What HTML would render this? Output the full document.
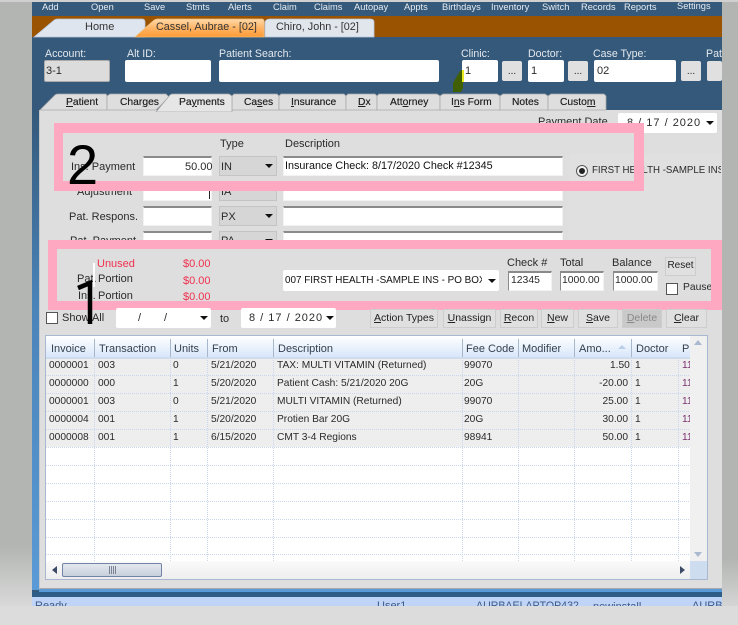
<!DOCTYPE html>
<html><head><meta charset="utf-8">
<style>
html,body{margin:0;padding:0}
body{width:738px;height:625px;position:relative;overflow:hidden;background:#dcdcdc;font-family:"Liberation Sans",sans-serif;font-size:11px;color:#222;filter:blur(.25px)}
div,span.a,svg{position:absolute}
.t{position:absolute;white-space:nowrap;line-height:14px;height:14px;font-size:11px;color:#2a2a2a}
.w{color:#e4e8ee;font-size:10.6px}
.m{color:#e8ecf2;font-size:9.3px;line-height:10px;height:10px;top:2px}
.tb{font-size:10.3px;color:#222;top:96px;text-shadow:0 0 .4px #333}
.in{background:#fff;box-sizing:border-box;border-radius:2px}
.f{background:#fff;box-sizing:border-box;border:1px solid #f2f2f2;border-top:2px solid #8a8a8a}
.sel{background:#d6d6d6;border:1px solid #c4c4c4;box-sizing:border-box}
.btn{background:#e0e0e0;border:1px solid #cdcdcd;box-sizing:border-box;text-align:center;line-height:16px;font-size:10.5px;color:#222;height:19px;top:309px}
.dd{width:0;height:0;border-left:4px solid transparent;border-right:4px solid transparent;border-top:4px solid #111}
.h{font-size:11px;color:#33404f;top:342px}
.r{color:#2a2a2a;font-size:10.2px}
.red{color:#f0304f}
.pk{background:#ffa8c1}
</style></head><body>
<!-- outer background -->
<div style="left:0;top:0;width:32px;height:606px;background:linear-gradient(#b3b5b3 0,#b3b5b3 90%,#d8d9d8 100%)"></div>
<div style="left:722px;top:0;width:16px;height:606px;background:linear-gradient(#b3b5b3 0,#b3b5b3 92%,#d4d5d4 100%)"></div>
<div style="left:0;top:0;width:738px;height:2px;background:#d0d0d0"></div>
<!-- window -->
<div style="left:32px;top:2px;width:690px;height:604px;background:#34597a"></div>
<div style="left:32px;top:110px;width:7px;height:480px;background:linear-gradient(#34597a,#4a83b8 40%,#5a9ad6)"></div>
<!-- menu -->
<span class="t m" style="left:42px">Add</span>
<span class="t m" style="left:91px">Open</span>
<span class="t m" style="left:144px">Save</span>
<span class="t m" style="left:186px">Stmts</span>
<span class="t m" style="left:228px">Alerts</span>
<span class="t m" style="left:273px">Claim</span>
<span class="t m" style="left:314px">Claims</span>
<span class="t m" style="left:354px">Autopay</span>
<span class="t m" style="left:404px;top:2px">Appts</span>
<span class="t m" style="left:442px;top:2px">Birthdays</span>
<span class="t m" style="left:491px;top:2px">Inventory</span>
<span class="t m" style="left:542px;top:2px">Switch</span>
<span class="t m" style="left:581px;top:2px">Records</span>
<span class="t m" style="left:624px;top:2px">Reports</span>
<span class="t m" style="left:677px;top:1px">Settings</span>
<!-- orange band and doc tabs -->
<div style="left:32px;top:16px;width:690px;height:21px;background:#9a5300"></div>
<svg style="left:32px;top:16px" width="350" height="22">
<defs><linearGradient id="o" x1="0" y1="0" x2="0" y2="1"><stop offset="0" stop-color="#ffd9a8"/><stop offset=".5" stop-color="#ffb566"/><stop offset="1" stop-color="#ff9a33"/></linearGradient></defs>
<path d="M2 21 L21 5 Q23 3 26 3 L110 3 Q113 3 113 6 L113 21Z" fill="#dfe5ee" stroke="#b8c8dc" stroke-width=".8"/>
<path d="M103 21 L121 5 Q123 3 126 3 L230 3 Q232 3 232 6 L232 21Z" fill="url(#o)" stroke="#f0c080" stroke-width=".8"/>
<path d="M233 21 L233 6 Q234 3 238 3 L338 3 Q342 3 342 6 L342 21Z" fill="#e1e6ed" stroke="#b8c8dc" stroke-width=".8"/>
</svg>
<span class="t" style="left:85px;top:20px;color:#333">Home</span>
<span class="t" style="left:156px;top:20px;color:#333;font-size:10.8px">Cassel, Aubrae - [02]</span>
<span class="t" style="left:276px;top:20px;color:#333;font-size:10.8px">Chiro, John - [02]</span>
<!-- patient bar -->
<span class="t w" style="left:45px;top:47px">Account:</span>
<span class="t w" style="left:127px;top:47px">Alt ID:</span>
<span class="t w" style="left:219px;top:47px">Patient Search:</span>
<span class="t w" style="left:461px;top:47px">Clinic:</span>
<span class="t w" style="left:528px;top:47px">Doctor:</span>
<span class="t w" style="left:593px;top:47px">Case Type:</span>
<span class="t w" style="left:706px;top:47px;width:16px;overflow:hidden">Patient</span>
<div class="in" style="left:44px;top:60px;width:66px;height:22px;background:#dcdcdc;border:1px solid #aaa"></div>
<span class="t" style="left:46px;top:64px">3-1</span>
<div class="in" style="left:125px;top:60px;width:86px;height:22px"></div>
<div class="in" style="left:219px;top:60px;width:220px;height:22px"></div>
<div class="in" style="left:462px;top:60px;width:36px;height:22px"></div>
<div class="in" style="left:528px;top:60px;width:36px;height:22px"></div>
<div class="in" style="left:594px;top:60px;width:82px;height:22px"></div>
<span class="t" style="left:465px;top:64px">1</span>
<span class="t" style="left:531px;top:64px">1</span>
<span class="t" style="left:597px;top:64px">02</span>
<div class="in" style="left:502px;top:61px;width:20px;height:20px;background:#e0e0e0;text-align:center;font-size:10px;line-height:22px">...</div>
<div class="in" style="left:568px;top:61px;width:20px;height:20px;background:#e0e0e0;text-align:center;font-size:10px;line-height:22px">...</div>
<div class="in" style="left:681px;top:61px;width:20px;height:20px;background:#e0e0e0;text-align:center;font-size:10px;line-height:22px">...</div>
<div class="in" style="left:707px;top:61px;width:15px;height:20px;background:#e0e0e0"></div>
<svg style="left:450px;top:68px" width="16" height="26"><path d="M3 15 L10 3 L13 2 L13 20 L11 24 L3 24Z" fill="#3f5f00"/><rect x="12" y="2" width="2" height="12" fill="#e8e820"/></svg>
<!-- main panel -->
<div style="left:39px;top:110px;width:683px;height:479px;background:#dedede;box-sizing:border-box;border-left:1px solid #c8c8c8;border-bottom:1px solid #a8a8a8"></div>
<!-- sub tabs -->
<svg style="left:38px;top:92px" width="580" height="20">
<g fill="#dedede" stroke="#a9a9a9" stroke-width=".8">
<path d="M2 18 L17 3 Q18 2 20 2 L68 2 L69 4 L69 18Z"/>
<path d="M69 18 L69 4 L72 2 L128 2 L131 5 L118 18Z"/>
<path d="M194 18 L194 4 L196 2 L239 2 L241 4 L241 18Z"/>
<path d="M241 18 L241 4 L243 2 L306 2 L308 4 L308 18Z"/>
<path d="M308 18 L308 4 L310 2 L337 2 L339 4 L339 18Z"/>
<path d="M339 18 L339 4 L341 2 L399 2 L402 4 L402 18Z"/>
<path d="M402 18 L402 4 L405 2 L459 2 L462 4 L462 18Z"/>
<path d="M462 18 L462 4 L465 2 L507 2 L510 4 L510 18Z"/>
<path d="M510 18 L510 4 L513 2 L566 2 L568 4 L568 18Z"/>
<path d="M118 20 L132 3 Q133 2 135 2 L191 2 L194 4 L194 20Z" fill="#e6e6e6"/>
</g></svg>
<span class="t tb" style="left:66px"><u>P</u>atient</span>
<span class="t tb" style="left:120px">Char<u>g</u>es</span>
<span class="t tb" style="left:179px">Pa<u>y</u>ments</span>
<span class="t tb" style="left:244px">Ca<u>s</u>es</span>
<span class="t tb" style="left:291px"><u>I</u>nsurance</span>
<span class="t tb" style="left:358px"><u>D</u>x</span>
<span class="t tb" style="left:390px">Att<u>o</u>rney</span>
<span class="t tb" style="left:451px">I<u>n</u>s Form</span>
<span class="t tb" style="left:512px">Notes</span>
<span class="t tb" style="left:560px">Custo<u>m</u></span>
<!-- payment date -->
<span class="t" style="left:538px;top:115px">Payment Date</span>
<div class="in" style="left:618px;top:113px;width:99px;height:20px"></div>
<span class="t" style="left:627px;top:116px;letter-spacing:1px">8 / 17 / 2020</span>
<div class="dd" style="left:706px;top:121px"></div>
<!-- form -->
<span class="t" style="left:220px;top:137px">Type</span>
<span class="t" style="left:285px;top:137px">Description</span>
<span class="t" style="left:71px;top:160px">Ins. Payment</span>
<span class="t" style="left:77px;top:185px">Adjustment</span>
<span class="t" style="left:69px;top:210px">Pat. Respons.</span>
<span class="t" style="left:70px;top:234px">Pat. Payment</span>
<div class="f" style="left:143px;top:156px;width:69px;height:20px"></div>
<div class="f" style="left:143px;top:181px;width:69px;height:20px"></div>
<div class="f" style="left:143px;top:206px;width:69px;height:20px"></div>
<div class="f" style="left:143px;top:231px;width:69px;height:20px"></div>
<span class="t" style="left:185px;top:160px">50.00</span>
<div style="left:209px;top:190px;width:1px;height:9px;background:#222"></div>
<div class="sel" style="left:219px;top:156px;width:58px;height:20px"></div>
<div class="sel" style="left:219px;top:181px;width:58px;height:20px"></div>
<div class="sel" style="left:219px;top:206px;width:58px;height:20px"></div>
<div class="sel" style="left:219px;top:231px;width:58px;height:20px"></div>
<span class="t" style="left:221px;top:160px">IN</span>
<span class="t" style="left:221px;top:185px">IA</span>
<span class="t" style="left:221px;top:210px">PX</span>
<span class="t" style="left:221px;top:234px">PA</span>
<div class="dd" style="left:265px;top:164px"></div>
<div class="dd" style="left:265px;top:214px"></div>
<div class="dd" style="left:265px;top:239px"></div>
<div class="f" style="left:283px;top:156px;width:280px;height:20px"></div>
<div class="f" style="left:283px;top:181px;width:280px;height:20px"></div>
<div class="f" style="left:283px;top:206px;width:280px;height:20px"></div>
<div class="f" style="left:283px;top:231px;width:280px;height:20px"></div>
<span class="t" style="left:285px;top:159px;font-size:10.8px;color:#111">Insurance Check: 8/17/2020 Check #12345</span>
<!-- radio -->
<div style="left:569px;top:154px;width:153px;height:90px;background:#e0e0e0"></div>
<div style="left:576px;top:165px;width:12px;height:12px;box-sizing:border-box;border:1px solid #555;border-radius:50%;background:#f4f4f4"></div>
<div style="left:579px;top:168px;width:6px;height:6px;border-radius:50%;background:#222"></div>
<span class="t" style="left:592px;top:164px;font-size:9.7px;width:129px;overflow:hidden">FIRST HEALTH -SAMPLE INS</span>
<!-- pink 2 -->
<div class="pk" style="left:54px;top:123px;width:590px;height:10px"></div>
<div class="pk" style="left:54px;top:181px;width:590px;height:10px"></div>
<div class="pk" style="left:54px;top:123px;width:9px;height:68px"></div>
<div class="pk" style="left:634px;top:123px;width:10px;height:68px"></div>
<span class="t" style="left:67px;top:140px;font-size:56px;line-height:50px;height:50px;color:#000">2</span>
<!-- section 1 bg -->
<div style="left:47px;top:240px;width:675px;height:70px;background:#dedede"></div>
<span class="t red" style="left:97px;top:257px">Unused</span>
<span class="t" style="left:98px;top:272px">Portion</span>
<span class="t" style="left:98px;top:289px">Portion</span>
<span class="t" style="left:77px;top:272px">Pat.</span>
<span class="t" style="left:78px;top:289px">Ins.</span>
<span class="t red" style="left:183px;top:257px">$0.00</span>
<span class="t red" style="left:183px;top:274px">$0.00</span>
<span class="t red" style="left:183px;top:290px">$0.00</span>
<div style="left:93px;top:263px;width:2px;height:24px;background:#fff"></div>
<div class="in" style="left:283px;top:270px;width:216px;height:21px"></div>
<span class="t" style="left:285px;top:274px;width:197px;overflow:hidden;font-size:9.9px;color:#111">007 FIRST HEALTH -SAMPLE INS - PO BOX</span>
<div class="dd" style="left:488px;top:279px"></div>
<span class="t" style="left:507px;top:256px">Check #</span>
<span class="t" style="left:560px;top:256px">Total</span>
<span class="t" style="left:612px;top:256px">Balance</span>
<div class="f" style="left:508px;top:271px;width:44px;height:20px;border-left:1px solid #8a8a8a"></div>
<div class="f" style="left:560px;top:271px;width:44px;height:20px;border-left:1px solid #8a8a8a"></div>
<div class="f" style="left:613px;top:271px;width:45px;height:20px;border-left:1px solid #8a8a8a"></div>
<span class="t" style="left:511px;top:274px;font-size:10.4px">12345</span>
<span class="t" style="left:562px;top:274px;font-size:10.4px">1000.00</span>
<span class="t" style="left:615px;top:274px;font-size:10.4px">1000.00</span>
<div class="btn" style="left:665px;top:257px;width:31px;font-size:10px;background:#e0e0e0">Reset</div>
<div style="left:666px;top:283px;width:12px;height:12px;box-sizing:border-box;background:#fff;border:1px solid #555"></div>
<span class="t" style="left:683px;top:281px;font-size:10.3px">Pause</span>
<!-- pink 1 -->
<div class="pk" style="left:48px;top:240px;width:674px;height:9px"></div>
<div class="pk" style="left:48px;top:301px;width:674px;height:9px"></div>
<div class="pk" style="left:48px;top:240px;width:9px;height:70px"></div>
<div class="pk" style="left:711px;top:240px;width:11px;height:70px"></div>
<!-- toolbar row -->
<div style="left:46px;top:312px;width:12px;height:12px;box-sizing:border-box;background:#fff;border:1px solid #555"></div>
<span class="t" style="left:62px;top:311px">Show All</span>
<div class="in" style="left:116px;top:308px;width:95px;height:20px"></div>
<span class="t" style="left:138px;top:311px">/</span>
<span class="t" style="left:164px;top:311px">/</span>
<div class="dd" style="left:200px;top:316px"></div>
<span class="t" style="left:220px;top:312px">to</span>
<div class="in" style="left:241px;top:308px;width:95px;height:20px"></div>
<span class="t" style="left:249px;top:311px;letter-spacing:1px">8 / 17 / 2020</span>
<div class="dd" style="left:326px;top:316px"></div>
<div class="btn" style="left:370px;width:68px"><u>A</u>ction Types</div>
<div class="btn" style="left:443px;width:53px"><u>U</u>nassign</div>
<div class="btn" style="left:500px;width:38px"><u>R</u>econ</div>
<div class="btn" style="left:541px;width:33px"><u>N</u>ew</div>
<div class="btn" style="left:578px;width:40px"><u>S</u>ave</div>
<div class="btn" style="left:622px;width:40px;background:#c9c9c9;color:#888"><u>D</u>elete</div>
<div class="btn" style="left:666px;width:41px"><u>C</u>lear</div>
<!-- big hand-drawn 1 -->
<svg style="left:70px;top:272px" width="30" height="60"><path d="M8 16 L20 11 L20 52" fill="none" stroke="#000" stroke-width="4.5"/></svg>
<!-- grid -->
<div style="left:45px;top:335px;width:663px;height:245px;background:#fff;box-sizing:border-box;border:1px solid #a9b8d0"></div>
<div style="left:46px;top:336px;width:644px;height:22px;background:linear-gradient(#fff,#d6e5fa)"></div>
<div style="left:46px;top:358px;width:644px;height:89px;background:#eeeeee"></div>
<div style="left:46px;top:357px;width:644px;height:2px;background:#cfdced"></div>
<svg style="left:46px;top:336px" width="644" height="225">
<g stroke="#c6d7ee" stroke-width="1" stroke-dasharray="1 1" fill="none">
<path d="M0 39.5H644M0 57.5H644M0 75.5H644M0 93.5H644M0 111.5H644M0 129.5H644M0 147.5H644M0 165.5H644M0 183.5H644M0 201.5H644M0 218.5H644"/>
<path d="M48.5 22V225M124.5 22V225M161.5 22V225M227.5 22V225M416.5 22V225M472.5 22V225M528.5 22V225M585.5 22V225M632.5 22V225"/>
</g>
<g stroke="#a8b8cc" stroke-width="1"><path d="M48.5 3V21M124.5 3V21M161.5 3V21M227.5 3V21M416.5 3V21M472.5 3V21M528.5 3V21M585.5 3V21"/></g>
</svg>
<span class="t h" style="left:51px">Invoice</span>
<span class="t h" style="left:99px">Transaction</span>
<span class="t h" style="left:174px">Units</span>
<span class="t h" style="left:212px">From</span>
<span class="t h" style="left:278px">Description</span>
<span class="t h" style="left:466px">Fee Code</span>
<span class="t h" style="left:522px">Modifier</span>
<span class="t h" style="left:579px">Amo...</span>
<div style="left:618px;top:345px;width:0;height:0;border-left:4px solid transparent;border-right:4px solid transparent;border-bottom:4px solid #b8cfe8"></div>
<span class="t h" style="left:636px">Doctor</span>
<span class="t h" style="left:682px;width:8px;overflow:hidden">Place</span>
<!-- rows -->
<span class="t r" style="left:49px;top:359px">0000001</span><span class="t r" style="left:98px;top:359px">003</span><span class="t r" style="left:173px;top:359px">0</span><span class="t r" style="left:211px;top:359px">5/21/2020</span><span class="t r" style="left:277px;top:359px">TAX: MULTI VITAMIN (Returned)</span><span class="t r" style="left:464px;top:359px">99070</span><span class="t r" style="left:610px;top:359px;width:18px;text-align:right">1.50</span><span class="t r" style="left:635px;top:359px">1</span><span class="t r" style="left:682px;top:359px;width:8px;overflow:hidden;color:#7a3070">11</span>
<span class="t r" style="left:49px;top:377px">0000000</span><span class="t r" style="left:98px;top:377px">000</span><span class="t r" style="left:173px;top:377px">1</span><span class="t r" style="left:211px;top:377px">5/20/2020</span><span class="t r" style="left:277px;top:377px">Patient Cash: 5/21/2020 20G</span><span class="t r" style="left:464px;top:377px">20G</span><span class="t r" style="left:590px;top:377px;width:38px;text-align:right">-20.00</span><span class="t r" style="left:635px;top:377px">1</span><span class="t r" style="left:682px;top:377px;width:8px;overflow:hidden;color:#7a3070">11</span>
<span class="t r" style="left:49px;top:395px">0000001</span><span class="t r" style="left:98px;top:395px">003</span><span class="t r" style="left:173px;top:395px">0</span><span class="t r" style="left:211px;top:395px">5/21/2020</span><span class="t r" style="left:277px;top:395px">MULTI VITAMIN (Returned)</span><span class="t r" style="left:464px;top:395px">99070</span><span class="t r" style="left:590px;top:395px;width:38px;text-align:right">25.00</span><span class="t r" style="left:635px;top:395px">1</span><span class="t r" style="left:682px;top:395px;width:8px;overflow:hidden;color:#7a3070">11</span>
<span class="t r" style="left:49px;top:413px">0000004</span><span class="t r" style="left:98px;top:413px">001</span><span class="t r" style="left:173px;top:413px">1</span><span class="t r" style="left:211px;top:413px">5/20/2020</span><span class="t r" style="left:277px;top:413px">Protien Bar 20G</span><span class="t r" style="left:464px;top:413px">20G</span><span class="t r" style="left:590px;top:413px;width:38px;text-align:right">30.00</span><span class="t r" style="left:635px;top:413px">1</span><span class="t r" style="left:682px;top:413px;width:8px;overflow:hidden;color:#7a3070">11</span>
<span class="t r" style="left:49px;top:431px">0000008</span><span class="t r" style="left:98px;top:431px">001</span><span class="t r" style="left:173px;top:431px">1</span><span class="t r" style="left:211px;top:431px">6/15/2020</span><span class="t r" style="left:277px;top:431px">CMT 3-4 Regions</span><span class="t r" style="left:464px;top:431px">98941</span><span class="t r" style="left:590px;top:431px;width:38px;text-align:right">50.00</span><span class="t r" style="left:635px;top:431px">1</span><span class="t r" style="left:682px;top:431px;width:8px;overflow:hidden;color:#7a3070">11</span>
<!-- scrollbars -->
<div style="left:690px;top:336px;width:17px;height:225px;background:#f0f0f0"></div>
<div style="left:694px;top:340px;width:0;height:0;border-left:4px solid transparent;border-right:4px solid transparent;border-bottom:5px solid #aab8d0"></div>
<div style="left:694px;top:552px;width:0;height:0;border-left:4px solid transparent;border-right:4px solid transparent;border-top:5px solid #aab8d0"></div>
<div style="left:46px;top:561px;width:644px;height:18px;background:linear-gradient(#fafafa,#eeeeee)"></div>
<div style="left:690px;top:561px;width:17px;height:18px;background:#cddcee"></div>
<div style="left:52px;top:566px;width:0;height:0;border-top:4px solid transparent;border-bottom:4px solid transparent;border-right:5px solid #3d4a66"></div>
<div style="left:680px;top:566px;width:0;height:0;border-top:4px solid transparent;border-bottom:4px solid transparent;border-left:5px solid #3d4a66"></div>
<div style="left:62px;top:563px;width:100px;height:14px;box-sizing:border-box;border:1px solid #7183a6;border-radius:2px;background:linear-gradient(#e4e8ee,#c8d0dc)"></div>
<div style="left:109px;top:566px;width:7px;height:8px;background:repeating-linear-gradient(90deg,#7a8494 0,#7a8494 1px,transparent 1px,transparent 2px)"></div>
<!-- bottom -->
<div style="left:39px;top:589px;width:683px;height:3px;background:#5a9ad6"></div>
<div style="left:32px;top:592px;width:690px;height:5px;background:#2f5d85"></div>
<div style="left:32px;top:597px;width:690px;height:9px;background:#bfd4f6;overflow:hidden">
<span class="t" style="left:3px;top:2px;color:#3c5a88">Ready</span>
<span class="t" style="left:345px;top:2px;color:#3c5a88">User1</span>
<span class="t" style="left:444px;top:2px;color:#3c5a88;font-size:10.6px">AURBAELAPTOP432</span>
<span class="t" style="left:561px;top:3px;color:#3c5a88">newinstall</span>
<span class="t" style="left:660px;top:2px;color:#3c5a88">AURBAE</span>
</div>
</body></html>
